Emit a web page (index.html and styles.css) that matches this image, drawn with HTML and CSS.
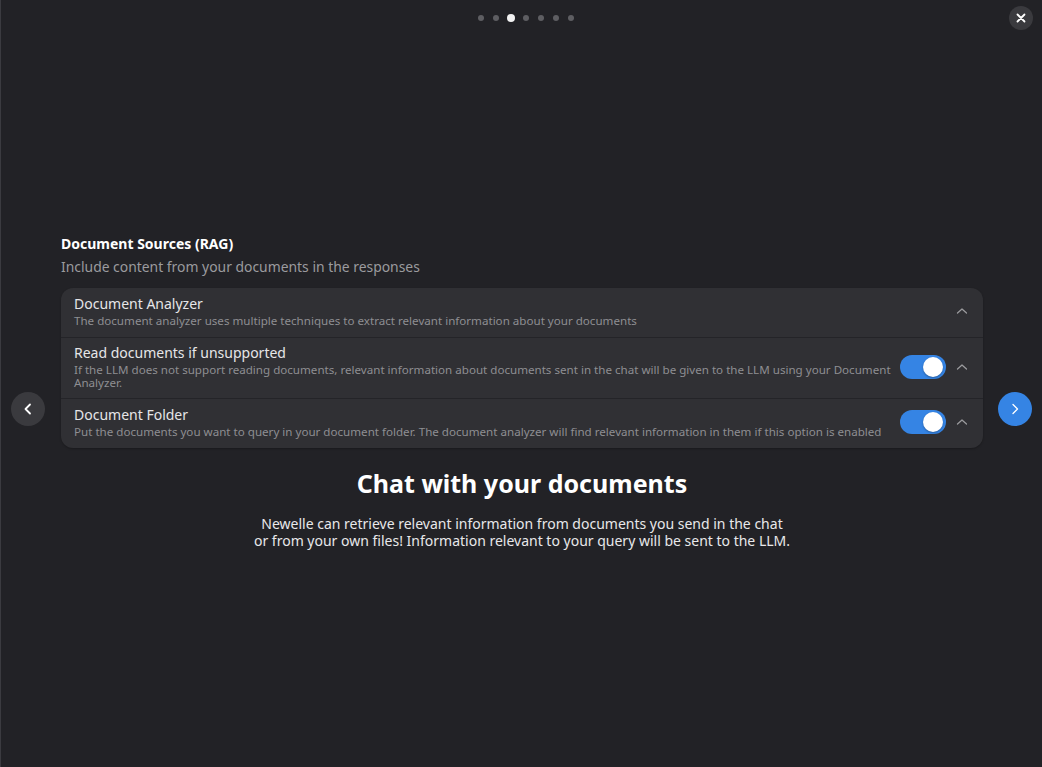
FILE: index.html
```html
<!DOCTYPE html>
<html lang="en">
<head>
<meta charset="UTF-8">
<meta name="viewport" content="width=device-width, initial-scale=1.0">
<title>Newelle - Welcome</title>
<link rel="stylesheet" href="styles.css">
</head>
<body>

<div class="window">
    <div class="topbar">
        <div class="dots">
            <span class="dot"></span>
            <span class="dot"></span>
            <span class="dot active"></span>
            <span class="dot"></span>
            <span class="dot"></span>
            <span class="dot"></span>
            <span class="dot"></span>
        </div>
        <button class="close-btn" aria-label="Close">
            <svg width="10" height="10" viewBox="0 0 10 10"><path d="M1.5 1.5 L8.5 8.5 M8.5 1.5 L1.5 8.5" stroke="#ffffff" stroke-width="1.8" stroke-linecap="round"/></svg>
        </button>
    </div>

    <div class="stage">
        <button class="nav-btn prev" aria-label="Previous">
            <svg width="12" height="12" viewBox="0 0 12 12"><path d="M8 1.5 L3.5 6 L8 10.5" fill="none" stroke="#ffffff" stroke-width="1.8" stroke-linecap="round" stroke-linejoin="round"/></svg>
        </button>

        <div class="page">
            <div class="group-title">Document Sources (RAG)</div>
            <div class="group-desc">Include content from your documents in the responses</div>

            <div class="card">
                <div class="row">
                    <div class="row-text">
                        <div class="row-title">Document Analyzer</div>
                        <div class="row-sub">The document analyzer uses multiple techniques to extract relevant information about your documents</div>
                    </div>
                    <span class="chevron"><svg width="12" height="8" viewBox="0 0 12 8"><path d="M1.5 6 L6 2 L10.5 6" fill="none" stroke="#9a9a9d" stroke-width="1.3" stroke-linecap="round" stroke-linejoin="round"/></svg></span>
                </div>
                <div class="row">
                    <div class="row-text">
                        <div class="row-title">Read documents if unsupported</div>
                        <div class="row-sub">If the LLM does not support reading documents, relevant information about documents sent in the chat will be given to the LLM using your Document Analyzer.</div>
                    </div>
                    <span class="switch on"><span class="knob"></span></span>
                    <span class="chevron"><svg width="12" height="8" viewBox="0 0 12 8"><path d="M1.5 6 L6 2 L10.5 6" fill="none" stroke="#9a9a9d" stroke-width="1.3" stroke-linecap="round" stroke-linejoin="round"/></svg></span>
                </div>
                <div class="row">
                    <div class="row-text">
                        <div class="row-title">Document Folder</div>
                        <div class="row-sub">Put the documents you want to query in your document folder. The document analyzer will find relevant information in them if this option is enabled</div>
                    </div>
                    <span class="switch on"><span class="knob"></span></span>
                    <span class="chevron"><svg width="12" height="8" viewBox="0 0 12 8"><path d="M1.5 6 L6 2 L10.5 6" fill="none" stroke="#9a9a9d" stroke-width="1.3" stroke-linecap="round" stroke-linejoin="round"/></svg></span>
                </div>
            </div>

            <h1 class="headline">Chat with your documents</h1>
            <p class="blurb">Newelle can retrieve relevant information from documents you send in the chat<br>or from your own files! Information relevant to your query will be sent to the LLM.</p>
        </div>

        <button class="nav-btn next" aria-label="Next">
            <svg width="12" height="12" viewBox="0 0 12 12"><path d="M4 1.5 L8.5 6 L4 10.5" fill="none" stroke="#ffffff" stroke-width="1.3" stroke-linecap="round" stroke-linejoin="round"/></svg>
        </button>
    </div>
</div>

</body>
</html>
```

FILE: styles.css
```css
/* Onboarding window, dark theme */
body {
    margin: 0;
    padding: 0;
    background-color: #222226;
    font-family: 'Noto Sans', 'Open Sans', sans-serif;
    color: #ffffff;
}
.window {
    height: 767px;
    box-sizing: border-box;
    border-left: 1px solid #3b3b40;
    display: flex;
    flex-direction: column;
    overflow: hidden;
}

/* top bar: page dots + close */
.topbar {
    position: relative;
    height: 36px;
    display: flex;
    justify-content: center;
}
.dots {
    display: flex;
    align-items: center;
    gap: 9px;
    height: 36px;
    margin-left: 8px;
}
.dot {
    width: 6px;
    height: 6px;
    border-radius: 50%;
    background-color: #5e5e62;
}
.dot.active {
    width: 8px;
    height: 8px;
    margin: 0 -1px;
    background-color: #f2f2f2;
}
.close-btn {
    position: absolute;
    top: 6px;
    right: 9px;
    width: 24px;
    height: 24px;
    border: none;
    border-radius: 50%;
    background-color: #3a3a3e;
    padding: 0;
    display: flex;
    align-items: center;
    justify-content: center;
    cursor: pointer;
}

/* carousel stage */
.stage {
    flex: 1;
    display: flex;
    align-items: flex-start;
}
.nav-btn {
    width: 34px;
    height: 34px;
    margin-top: 356px;
    border: none;
    border-radius: 50%;
    padding: 0;
    display: flex;
    align-items: center;
    justify-content: center;
    flex-shrink: 0;
    cursor: pointer;
}
.nav-btn.prev {
    margin-left: 10px;
    background-color: #3a3a3e;
}
.nav-btn.next {
    margin-right: 10px;
    background-color: #3584e4;
}
.page {
    flex: 1;
    padding: 200px 15px 0 16px;
}

.group-title {
    font-size: 14px;
    font-weight: bold;
    line-height: 16px;
    color: #ffffff;
}
.group-desc {
    font-size: 13.9px;
    line-height: 18px;
    margin-top: 6px;
    color: #9b9b9e;
}

/* boxed list */
.card {
    margin-top: 12px;
    background-color: #303034;
    border-radius: 12px;
    overflow: hidden;
    box-shadow: 0 1px 2px rgba(0, 0, 0, 0.25);
}
.row {
    display: flex;
    align-items: center;
    padding: 6px 14px 9px 13px;
    min-height: 34px;
}
.row + .row {
    border-top: 1px solid #242428;
}
.row-text {
    flex: 1;
}
.row-title {
    font-size: 14px;
    line-height: 18px;
    color: #e6e6e8;
}
.row-sub {
    font-size: 11.6px;
    line-height: 13px;
    margin-top: 1px;
    color: #8e8e92;
}
.switch {
    width: 46px;
    height: 24px;
    border-radius: 12px;
    background-color: #3584e4;
    margin-left: 8px;
    position: relative;
    flex-shrink: 0;
}
.switch .knob {
    position: absolute;
    top: 2px;
    right: 3px;
    width: 20px;
    height: 20px;
    border-radius: 50%;
    background-color: #ffffff;
    box-shadow: 0 1px 2px rgba(0, 0, 0, 0.3);
}
.chevron {
    width: 12px;
    display: flex;
    justify-content: center;
    margin-left: 10px;
    margin-right: 1px;
}

/* page copy */
.headline {
    text-align: center;
    font-size: 25px;
    font-weight: bold;
    margin: 20px 0 0;
    line-height: 30px;
}
.blurb {
    text-align: center;
    font-size: 14px;
    line-height: 17px;
    margin: 17px 0 0;
    color: #e8e8ea;
}
```
